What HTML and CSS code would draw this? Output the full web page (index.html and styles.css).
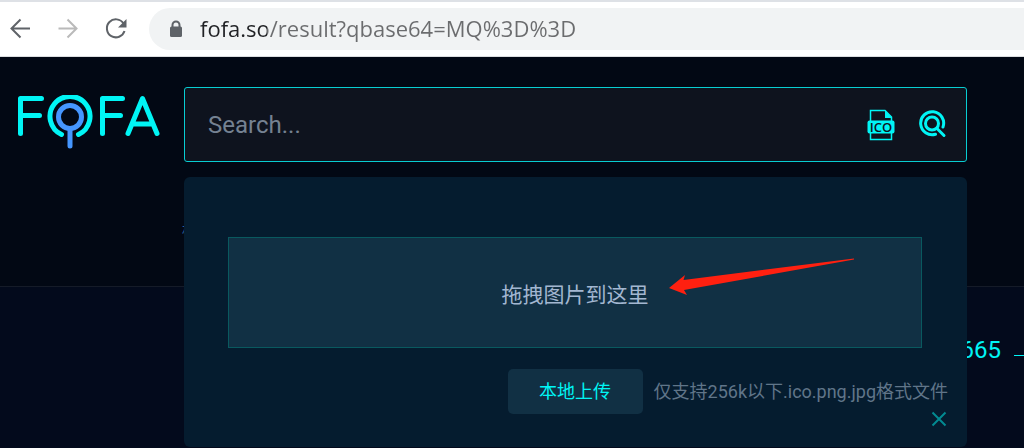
FILE: index.html
```
<!DOCTYPE html>
<html lang="zh-CN">
	<head>
		<meta charset="utf-8">
		<title>FOFA</title>
		<link rel="stylesheet" href="styles.css">
	</head>
	<body>
		<nav class="toolbar">
			<button class="nav-btn" type="button" aria-label="Back">
				<svg width="24" height="24" viewBox="0 0 24 24"><path d="M22 11.500H4M12.500 2.500L3.500 11.500l9 9"/></svg>
			</button>
			<button class="nav-btn disabled" type="button" aria-label="Forward">
				<svg width="24" height="24" viewBox="0 0 24 24"><path d="M2.500 11.500h18M11.500 2.500L20.500 11.500l-9 9"/></svg>
			</button>
			<button class="nav-btn" type="button" aria-label="Reload">
				<svg width="24" height="24" viewBox="0 0 24 24"><path d="M19.500 6.500A9 9 0 1 0 20.500 14"/><path class="solid" d="M22.500 2v8.500h-8.500z"/></svg>
			</button>
			<div class="address">
				<svg width="14" height="18" viewBox="0 0 14 18"><path class="lock" d="M3.500 7V5a3.500 3.500 0 0 1 7 0v2"/><rect x="1" y="6.500" width="12" height="10.500" rx="1.500"/></svg>
				<input class="url" type="text" aria-label="Address" value="fofa.so/result?qbase64=MQ%3D%3D">
			</div>
		</nav>
		<header class="header">
			<a class="logo" href="#" aria-label="FOFA">
				<svg width="144" height="58" viewBox="0 0 144 58">
					<g class="cyan">
						<path d="M3.500 38.500V3.500H24.500M3.500 20.500H22.500"/>
						<path d="M44.500 39.500A20 20 0 1 1 61.500 39.500"/>
						<path d="M85.500 38.500V3.500H105.500M85.500 20.500H103.500"/>
						<path d="M111 38.500L125.500 3.500L140 38.500M116 29H135"/>
					</g>
					<g class="blue">
						<circle cx="53" cy="22" r="11.500"/>
						<path d="M53 34V51"/>
					</g>
				</svg>
			</a>
			<div class="search">
				<form class="search-box">
					<input class="query" type="text" placeholder="Search..." aria-label="Search">
					<button class="icon-btn" type="button" aria-label="Search by icon">
						<svg width="30" height="32" viewBox="0 0 30 32">
							<path class="line" d="M4.500 12V1.500H19L25.500 8V12M4.500 24v6.500h21V24"/>
							<path class="fill" d="M19 1l7 8h-7z"/>
							<rect class="fill" x="1.500" y="11.500" width="27" height="13" rx="2"/>
							<text x="15" y="22.500" text-anchor="middle">ICO</text>
						</svg>
					</button>
					<button class="icon-btn" type="submit" aria-label="Search">
						<svg width="30" height="30" viewBox="0 0 30 30">
							<path class="ring" d="M18.500 24.200A11.500 11.500 0 1 1 26 17"/>
							<circle class="ring" cx="15" cy="13.500" r="6.500"/>
							<path class="ring" d="M20 18.500l7 7"/>
						</svg>
					</button>
				</form>
				<section class="panel">
					<div class="drop-zone">
						<span>拖拽图片到这里</span>
						<svg class="arrow" width="186" height="38" viewBox="0 0 186 38"><path d="M0 30L16 17L14.500 22L185 0.500V1.500L15 32L18 37z"/></svg>
					</div>
					<div class="upload">
						<button class="upload-btn" type="button">本地上传</button>
						<span class="hint">仅支持256k以下.ico.png.jpg格式文件</span>
					</div>
					<button class="close" type="button" aria-label="Close">
						<svg width="16" height="16" viewBox="0 0 16 16"><path d="M1.500 1.500l13 13M14.500 1.500l-13 13"/></svg>
					</button>
				</section>
				<p class="related">相关</p>
			</div>
		</header>
		<main class="results">
			<span class="count">665</span>
			<span class="dash"></span>
		</main>
	</body>
</html>
```
FILE: styles.css
```
* {
	box-sizing: border-box;
}
body {
	margin: 0;
	min-height: 100vh;
	display: flex;
	flex-direction: column;
	background: #030a1c;
	font-family: Roboto, "Noto Sans CJK SC", sans-serif;
	overflow: hidden;
}
button {
	padding: 0;
	border: 0;
	background: none;
	font-family: inherit;
	cursor: pointer;
}
svg {
	display: block;
}

/* browser toolbar */
.toolbar {
	display: flex;
	align-items: center;
	gap: 24px;
	height: 57px;
	padding-left: 8px;
	background: #fff;
	border-top: 2px solid #dee1e6;
	border-bottom: 1px solid #dcdee0;
}
.nav-btn path {
	fill: none;
	stroke: #5f6368;
	stroke-width: 2;
}
.nav-btn .solid {
	fill: #5f6368;
	stroke: none;
}
.nav-btn.disabled path {
	stroke: #bababa;
}
.address {
	flex: 1;
	display: flex;
	align-items: center;
	gap: 17px;
	height: 42px;
	margin-left: -3px;
	padding-left: 20px;
	background: #f1f3f4;
	border-radius: 21px 0 0 21px;
}
.address rect {
	fill: #5f6368;
}
.lock {
	fill: none;
	stroke: #5f6368;
	stroke-width: 2;
}
.url {
	flex: 1;
	min-width: 0;
	padding: 0 0 2px;
	border: 0;
	outline: 0;
	font: 22px/30px "Open Sans", sans-serif;
	color: transparent;
	background: linear-gradient(90deg, #202124 67px, #6b6c6e 67px);
	-webkit-background-clip: text;
	background-clip: text;
}

/* header */
.header {
	display: flex;
	align-items: flex-start;
	height: 230px;
	padding: 30px 57px 0 16px;
	background: #020814;
	border-bottom: 1px solid #151b28;
}
.logo {
	width: 168px;
	padding: 8px 0 0 1px;
}
.logo path, .logo circle {
	fill: none;
	stroke-width: 5;
	stroke-linecap: round;
	stroke-linejoin: round;
}
.cyan {
	stroke: #00f5f5;
}
.blue {
	stroke: #4596ff;
}
.search {
	position: relative;
	flex: 1;
}
.search-box {
	display: flex;
	align-items: center;
	gap: 21px;
	height: 75px;
	padding: 0 19px 0 23px;
	background: #0e131e;
	border: 1px solid #08cdd2;
	border-radius: 3px;
}
.query {
	flex: 1;
	min-width: 0;
	padding: 0;
	border: 0;
	outline: 0;
	background: none;
	color: #fff;
	font: 24px/32px Roboto, sans-serif;
}
.query::placeholder {
	color: #758292;
}
.icon-btn .line {
	fill: none;
	stroke: #00f5f5;
	stroke-width: 1.5;
}
.icon-btn .fill {
	fill: #00f5f5;
}
.icon-btn text {
	fill: #0e131e;
	font: 600 13px "Open Sans", sans-serif;
}
.icon-btn .ring {
	fill: none;
	stroke: #00f5f5;
	stroke-width: 3;
	stroke-linecap: round;
}
.related {
	margin: 58px 0 0 -2px;
	color: #285f9d;
	font-size: 14px;
	line-height: 20px;
}

/* icon upload menu */
.panel {
	position: absolute;
	top: 90px;
	left: 0;
	right: 0;
	padding: 60px 19px 20px 44px;
	background: #051c2f;
	border-radius: 6px;
}
.drop-zone {
	position: relative;
	display: flex;
	align-items: center;
	justify-content: center;
	height: 111px;
	margin-right: 26px;
	background: #113044;
	border: 1px solid #09595f;
	color: #a3b7d1;
	font-size: 21px;
}
.arrow {
	position: absolute;
	top: 20px;
	right: 66px;
	fill: #ff2010;
}
.upload {
	display: flex;
	align-items: center;
	justify-content: flex-end;
	gap: 11px;
	margin-top: 21px;
}
.upload-btn {
	width: 135px;
	height: 45px;
	padding-bottom: 4px;
	background: #113044;
	border-radius: 5px;
	color: #00f5f5;
	font-size: 18px;
}
.hint {
	padding-bottom: 4px;
	color: #607589;
	font-size: 18px;
	white-space: nowrap;
}
.close {
	display: block;
	margin: -3px 1px 0 auto;
}
.close path {
	stroke: #038a91;
	stroke-width: 2;
}

/* results */
.results {
	flex: 1;
	display: flex;
	align-items: flex-start;
	justify-content: flex-end;
	gap: 13px;
	padding-top: 47px;
}
.count {
	color: #00f5f5;
	font-size: 24px;
	line-height: 32px;
}
.dash {
	width: 10px;
	height: 22px;
	border-bottom: 1px solid #00f5f5;
}
```
